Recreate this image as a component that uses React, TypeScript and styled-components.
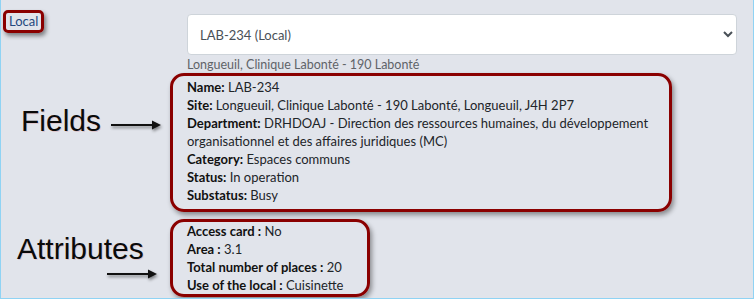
import { createGlobalStyle } from 'styled-components';
import styled from 'styled-components';

type Field = { label: string; value: string };

const fields: Field[] = [
  { label: 'Name:', value: 'LAB-234' },
  { label: 'Site:', value: 'Longueuil, Clinique Labonté - 190 Labonté, Longueuil, J4H 2P7' },
  {
    label: 'Department:',
    value:
      'DRHDOAJ - Direction des ressources humaines, du développement organisationnel et des affaires juridiques (MC)',
  },
  { label: 'Category:', value: 'Espaces communs' },
  { label: 'Status:', value: 'In operation' },
  { label: 'Substatus:', value: 'Busy' },
];

const attributes: Field[] = [
  { label: 'Access card :', value: 'No' },
  { label: 'Area :', value: '3.1' },
  { label: 'Total number of places :', value: '20' },
  { label: 'Use of the local :', value: 'Cuisinette' },
];

export default function App() {
  return (
    <>
      <GlobalStyle />
      <Page>
        <FormRow>
          <LabelColumn>
            <LocalLabel>Local</LocalLabel>
          </LabelColumn>
          <InputColumn>
            <Select defaultValue="LAB-234">
              <option value="LAB-234">LAB-234 (Local)</option>
            </Select>
            <HelpText>Longueuil, Clinique Labonté - 190 Labonté</HelpText>

            <FieldGroup $width={502} $padTop={2} $padBottom={5} $padRight={13}>
              <Callout $left={-152} $top={30}>
                <CalloutText>Fields</CalloutText>
                <Arrow $dx={9} $dy={13} />
              </Callout>
              {fields.map((f) => (
                <Line key={f.label}>
                  <Key>{f.label}</Key> {f.value}
                </Line>
              ))}
            </FieldGroup>

            <FieldGroup $padTop={0} $padBottom={0} $padRight={24} $gapTop={7}>
              <Callout $left={-156} $top={12} $column>
                <CalloutText>Attributes</CalloutText>
                <Arrow $dx={89} $dy={4} />
              </Callout>
              {attributes.map((f) => (
                <Line key={f.label}>
                  <Key>{f.label}</Key> {f.value}
                </Line>
              ))}
            </FieldGroup>
          </InputColumn>
        </FormRow>
      </Page>
    </>
  );
}

function Arrow({ $dx, $dy }: { $dx: number; $dy: number }) {
  return (
    <ArrowSvg $dx={$dx} $dy={$dy} width="52" height="12" viewBox="0 0 52 12">
      <line x1="1" y1="6" x2="44" y2="6" stroke="#111" strokeWidth="2.2" />
      <polygon points="42,1.5 51,6 42,10.5" fill="#111" />
    </ArrowSvg>
  );
}

const GlobalStyle = createGlobalStyle`
  html, body {
    margin: 0;
    padding: 0;
    background: #e1e4eb;
  }
  body {
    font-family: Lato, "Open Sans", sans-serif;
    color: #212529;
  }
`;

const Page = styled.div`
  box-sizing: border-box;
  width: 754px;
  height: 299px;
  overflow: hidden;
  background: #e1e4eb;
  border: 1px solid #8fd3f4;
  border-top: none;
`;

const FormRow = styled.div`
  display: grid;
  grid-template-columns: 186px 550px;
  padding-top: 10px;
`;

const LabelColumn = styled.div`
  padding-left: 2px;
`;

const LocalLabel = styled.label`
  display: inline-block;
  box-sizing: border-box;
  height: 23px;
  padding: 1px 3px 0;
  border: 3px solid #8a0000;
  border-radius: 5px;
  box-shadow: 2px 3px 4px rgba(0, 0, 0, 0.45);
  font-size: 13px;
  line-height: 15px;
  color: #24487e;
`;

const InputColumn = styled.div`
  display: flex;
  flex-direction: column;
  align-items: flex-start;
  padding-top: 4px;
`;

const Select = styled.select`
  box-sizing: border-box;
  width: 550px;
  height: 41px;
  padding: 0 8px;
  border: 1px solid #ced4da;
  border-radius: 4px;
  background: #fff;
  font-family: Lato, "Open Sans", sans-serif;
  font-size: 13px;
  color: #495057;
`;

const HelpText = styled.div`
  margin-top: 1px;
  font-size: 12.5px;
  line-height: 17px;
  color: #5f6368;
`;

const FieldGroup = styled.div<{
  $width?: number;
  $padTop: number;
  $padBottom: number;
  $padRight: number;
  $gapTop?: number;
}>`
  position: relative;
  box-sizing: border-box;
  width: ${(p) => (p.$width ? `${p.$width}px` : 'auto')};
  margin-left: -17px;
  margin-top: ${(p) => p.$gapTop ?? 0}px;
  padding: ${(p) => `${p.$padTop}px ${p.$padRight}px ${p.$padBottom}px 14px`};
  border: 3px solid #8a0000;
  border-radius: 14px;
  box-shadow: 2px 3px 5px rgba(0, 0, 0, 0.4);
`;

const Line = styled.div`
  font-size: 13px;
  line-height: 18px;
  color: #212529;
`;

const Key = styled.span`
  font-weight: 700;
  color: #111;
`;

const Callout = styled.div<{ $left: number; $top: number; $column?: boolean }>`
  position: absolute;
  left: ${(p) => p.$left}px;
  top: ${(p) => p.$top}px;
  display: flex;
  flex-direction: ${(p) => (p.$column ? 'column' : 'row')};
  align-items: flex-start;
`;

const CalloutText = styled.span`
  font-family: "Liberation Sans", Arial, sans-serif;
  font-size: 30px;
  line-height: 30px;
  color: #0a0a0a;
  text-shadow: 1px 1px 0 rgba(200, 0, 0, 0.15);
`;

const ArrowSvg = styled.svg<{ $dx: number; $dy: number }>`
  margin-left: ${(p) => p.$dx}px;
  margin-top: ${(p) => p.$dy}px;
  filter: drop-shadow(1px 2px 1.5px rgba(0, 0, 0, 0.45));
`;
